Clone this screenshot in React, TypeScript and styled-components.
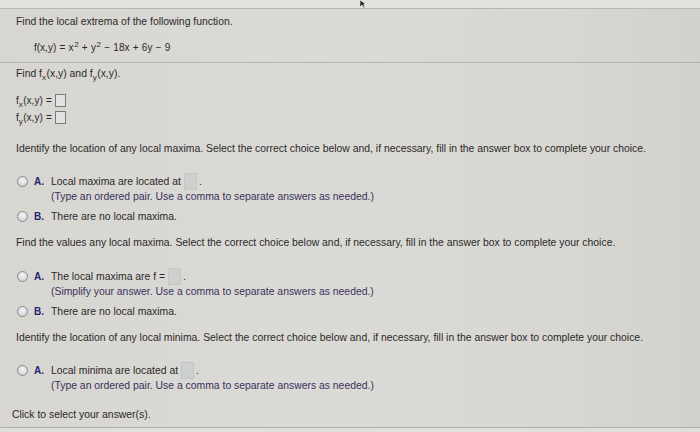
import React from "react";
import styled, { createGlobalStyle } from "styled-components";

const GlobalStyle = createGlobalStyle`
  html, body { margin: 0; padding: 0; }
  body { background: #d9d7d2; }
`;

const Page = styled.div`
  width: 700px;
  height: 432px;
  overflow: hidden;
  background: linear-gradient(90deg, #d8d6d1 0%, #dcdad6 45%, #d9d7d2 80%, #d3d1cc 100%);
  font-family: "Liberation Sans", Arial, sans-serif;
  font-size: 10.4px;
  color: #2a2a2a;
  display: flex;
  flex-direction: column;
  position: relative;
`;

const TopBar = styled.div`
  height: 8px;
  background: #e3e2df;
  border-bottom: 1px solid #b9b7b3;
  position: relative;
`;

const Cursor = styled.svg`
  position: absolute;
  left: 359px;
  top: -1px;
`;

const Header = styled.div`
  height: 53px;
  border-bottom: 1px solid #b5b3af;
  display: flex;
  flex-direction: column;
`;

const Row = styled.div<{ $h: number; $mt?: number; $pl?: number }>`
  height: ${(p) => p.$h}px;
  margin-top: ${(p) => p.$mt ?? 0}px;
  padding-left: ${(p) => p.$pl ?? 16}px;
  display: flex;
  align-items: center;
  white-space: nowrap;
`;

const Text = styled.span``;

const Formula = styled.span`
  font-size: 10px;
  word-spacing: 0.5px;
`;

const Sup = styled.sup`
  font-size: 8px;
  vertical-align: 4px;
  line-height: 0;
  margin-left: 0.5px;
`;

const Sub = styled.sub`
  font-size: 8px;
  vertical-align: -3px;
  line-height: 0;
  margin-right: 0.5px;
`;

const Body = styled.div`
  display: flex;
  flex-direction: column;
`;

const EmptyBox = styled.span`
  display: inline-block;
  width: 9px;
  height: 11px;
  border: 1px solid #6f807b;
  background: #e2e3e0;
  margin-left: 3px;
`;

const AnswerBox = styled.span`
  display: inline-block;
  width: 11px;
  height: 15px;
  border: 1px solid #c2c6c4;
  background: #cdd0cf;
  margin: 0 2px 0 3px;
`;

const Radio = styled.span`
  display: inline-block;
  width: 9px;
  height: 9px;
  border-radius: 50%;
  border: 1px solid #858b95;
  background: radial-gradient(circle at 50% 35%, #f4f5f6 0%, #d6d8db 70%, #b9bcc1 100%);
  margin-left: 17px;
  margin-right: 6px;
`;

const Letter = styled.span`
  font-weight: bold;
  color: #1f2670;
  width: 17px;
  font-size: 10px;
`;

const Hint = styled.div`
  height: 14px;
  padding-left: 51px;
  display: flex;
  align-items: center;
  white-space: nowrap;
  color: #38325c;
`;

const OptionRow = styled.div<{ $mt: number }>`
  height: 16px;
  margin-top: ${(p) => p.$mt}px;
  display: flex;
  align-items: center;
  white-space: nowrap;
`;

const Footer = styled.div`
  margin-top: 13px;
  height: 22px;
  border-bottom: 1px solid #b0aeaa;
  display: flex;
  align-items: flex-start;
`;

const FooterText = styled.div`
  height: 18px;
  padding-left: 12px;
  display: flex;
  align-items: center;
`;

const Bottom = styled.div`
  flex: 1;
  background: #e0dfdc;
`;

const Fn = ({ sub }: { sub: string }) => (
  <>
    f<Sub>{sub}</Sub>(x,y)
  </>
);

export default function App() {
  return (
    <>
      <GlobalStyle />
      <Page>
        <TopBar>
          <Cursor width="8" height="10" viewBox="0 0 8 10">
            <path d="M1 1 L1 8 L3 6 L5 9 L6 8.5 L4.5 5.5 L7 5.5 Z" fill="#222" stroke="#eee" strokeWidth="0.6" />
          </Cursor>
        </TopBar>
        <Header>
          <Row $h={24}>Find the local extrema of the following function.</Row>
          <Row $h={29} $pl={34}>
            <Formula>
              f(x,y) = x<Sup>2</Sup> + y<Sup>2</Sup> − 18x + 6y − 9
            </Formula>
          </Row>
        </Header>
        <Body>
          <Row $h={20}>
            <Text>
              Find <Fn sub="x" /> and <Fn sub="y" />.
            </Text>
          </Row>
          <Row $h={17} $mt={9}>
            <Formula>
              <Fn sub="x" /> =
            </Formula>
            <EmptyBox />
          </Row>
          <Row $h={17}>
            <Formula>
              <Fn sub="y" /> =
            </Formula>
            <EmptyBox />
          </Row>

          <Row $h={20} $mt={12}>
            Identify the location of any local maxima. Select the correct choice below and, if necessary, fill in the answer box to complete your choice.
          </Row>
          <OptionRow $mt={15}>
            <Radio />
            <Letter>A.</Letter>
            Local maxima are located at
            <AnswerBox />.
          </OptionRow>
          <Hint>(Type an ordered pair. Use a comma to separate answers as needed.)</Hint>
          <OptionRow $mt={5}>
            <Radio />
            <Letter>B.</Letter>
            There are no local maxima.
          </OptionRow>

          <Row $h={20} $mt={8}>
            Find the values any local maxima. Select the correct choice below and, if necessary, fill in the answer box to complete your choice.
          </Row>
          <OptionRow $mt={16}>
            <Radio />
            <Letter>A.</Letter>
            The local maxima are f =
            <AnswerBox />.
          </OptionRow>
          <Hint>(Simplify your answer. Use a comma to separate answers as needed.)</Hint>
          <OptionRow $mt={5}>
            <Radio />
            <Letter>B.</Letter>
            There are no local maxima.
          </OptionRow>

          <Row $h={20} $mt={8}>
            Identify the location of any local minima. Select the correct choice below and, if necessary, fill in the answer box to complete your choice.
          </Row>
          <OptionRow $mt={15}>
            <Radio />
            <Letter>A.</Letter>
            Local minima are located at
            <AnswerBox />.
          </OptionRow>
          <Hint>(Type an ordered pair. Use a comma to separate answers as needed.)</Hint>
        </Body>
        <Footer>
          <FooterText>Click to select your answer(s).</FooterText>
        </Footer>
        <Bottom />
      </Page>
    </>
  );
}
